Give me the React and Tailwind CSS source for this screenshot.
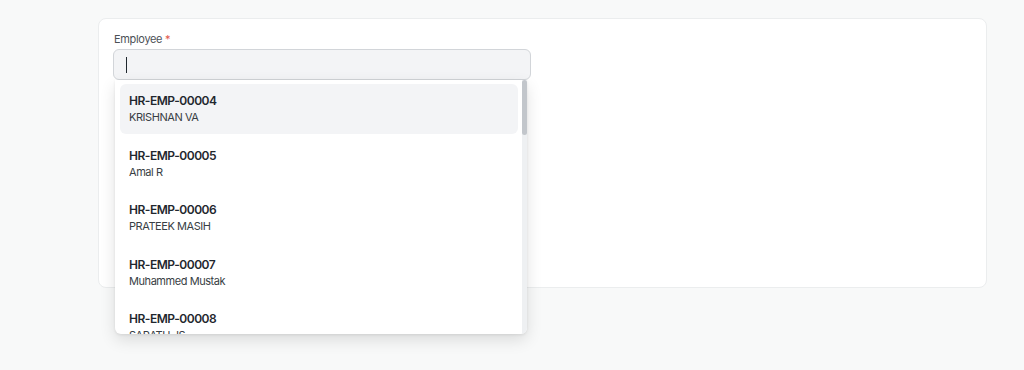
import React from 'react';

const employees = [
  { id: 'HR-EMP-00004', name: 'KRISHNAN VA' },
  { id: 'HR-EMP-00005', name: 'Amal R' },
  { id: 'HR-EMP-00006', name: 'PRATEEK MASIH' },
  { id: 'HR-EMP-00007', name: 'Muhammed Mustak' },
  { id: 'HR-EMP-00008', name: 'SARATH JS' },
];

export default function App() {
  return (
    <div
      className="w-[1024px] h-[370px] bg-[#f8f9f9] pt-[18px] pl-[98px] overflow-hidden"
      style={{ fontFamily: 'Inter, "Noto Sans", sans-serif' }}
    >
      {/* Card */}
      <div className="w-[889px] h-[270px] bg-white border border-[#ebedee] rounded-lg px-[14px] pt-[12px]">
        <div className="text-[11px] leading-4 tracking-[-0.03em] text-[#4c5157] mb-[2px] pl-px">
          Employee <span className="text-[#e2574c]">*</span>
        </div>

        <div className="relative w-[418px]">
          {/* Input */}
          <div className="h-[31px] bg-[#f3f4f6] border border-[#d2d5d9] rounded-md flex items-center px-3">
            <div className="w-px h-4 bg-[#1f272e]"></div>
          </div>

          {/* Dropdown */}
          <div className="absolute left-[2px] top-[31px] w-[412px] h-[254px] bg-white rounded-b-md shadow-[0_6px_16px_rgba(0,0,0,0.12),0_1px_3px_rgba(0,0,0,0.08)] flex overflow-hidden z-10">
            <div className="flex-1 pl-[5px] pr-[4px] pt-1 flex flex-col gap-[4.5px]">
              {employees.map((e, i) => (
                <div
                  key={e.id}
                  className={`shrink-0 h-[50px] rounded-md px-[9px] pt-[9px] ${i === 0 ? 'bg-[#f3f4f6]' : ''}`}
                >
                  <div className="text-[12px] leading-4 font-semibold text-[#1f272e] tracking-[-0.04em]">{e.id}</div>
                  <div className="text-[11px] leading-4 text-[#383e44] tracking-[-0.04em]">{e.name}</div>
                </div>
              ))}
            </div>
            {/* Scrollbar */}
            <div className="w-[5px] bg-[#eef0f2] flex flex-col">
              <div className="h-[55px] bg-[#c2c6cb] rounded-sm"></div>
            </div>
          </div>
        </div>
      </div>
    </div>
  );
}
